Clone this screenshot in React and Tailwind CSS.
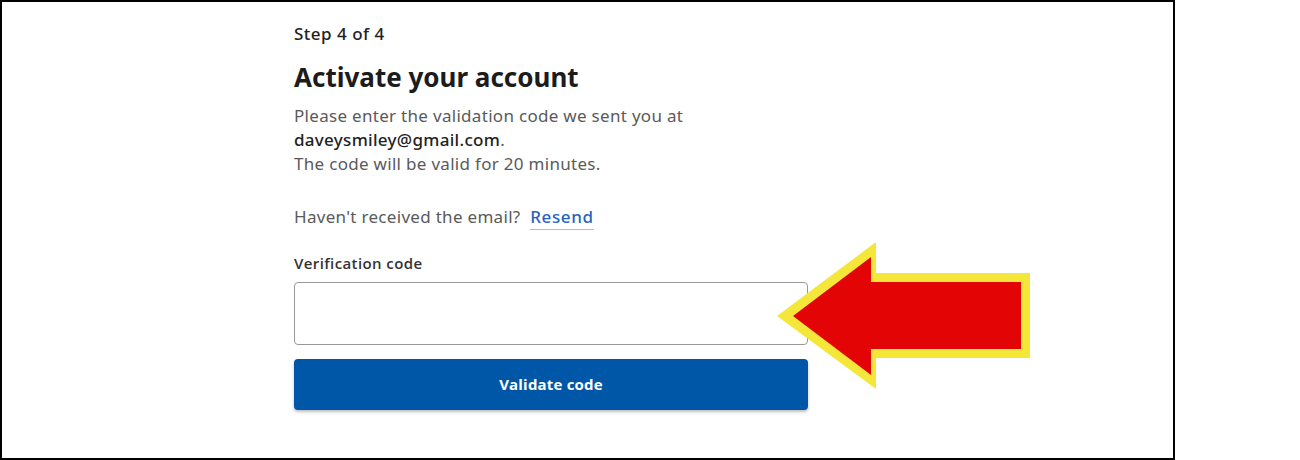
const Arrow = () => (
  <svg className="absolute left-0 top-0" width="1300" height="460" viewBox="0 0 1300 460">
    <polygon points="777,316 876,242 876,273 1030,273 1030,358 876,358 876,389" fill="#f5e63a" />
    <polygon points="793,316 871,257 871,282 1021,282 1021,349 871,349 871,375" fill="#e30505" />
  </svg>
);

const App = () => {
  return (
    <div className="relative w-[1300px] h-[460px] bg-white" style={{ fontFamily: '"Noto Sans", "Open Sans", sans-serif' }}>
      <div className="w-[1175px] h-[460px] border-2 border-black bg-white">
        <div className="pl-[292px] pt-[20px] w-[806px] box-content">
          <p className="text-[17px] font-medium text-[#222] leading-6 tracking-[0.5px]">Step 4 of 4</p>
          <h1 className="mt-[15px] text-[26px] font-bold text-[#1c1c1c] leading-8">Activate your account</h1>
          <div className="mt-[11px] text-[17px] leading-6 text-[#5a5a5a] tracking-[0.3px]">
            <p>Please enter the validation code we sent you at</p>
            <p><span className="text-[#222] font-medium">daveysmiley@gmail.com</span>.</p>
            <p>The code will be valid for 20 minutes.</p>
          </div>
          <p className="mt-[29px] text-[17px] leading-6 text-[#5a5a5a] tracking-[0.3px]">
            Haven't received the email?{' '}
            <a className="ml-[5px] text-[#2563c0] font-medium tracking-[0.6px] border-b border-[#9cc0ea] pb-[1px]">Resend</a>
          </p>
          <label className="block mt-[22px] text-[15px] font-semibold text-[#333] leading-6 tracking-[0.4px]" style={{ fontFamily: '"Open Sans", sans-serif' }}>Verification code</label>
          <input className="block mt-[7px] w-[514px] h-[63px] border border-[#999] rounded-[4px] bg-white" />
          <button className="mt-[14px] w-[514px] h-[51px] bg-[#0057a8] rounded-[4px] shadow-[0_2px_3px_rgba(0,0,0,0.25)] text-white text-[15px] font-bold tracking-[0.2px]" style={{ fontFamily: '"Open Sans", sans-serif' }}>
            Validate code
          </button>
        </div>
      </div>
      <Arrow />
    </div>
  );
};

export default App;
